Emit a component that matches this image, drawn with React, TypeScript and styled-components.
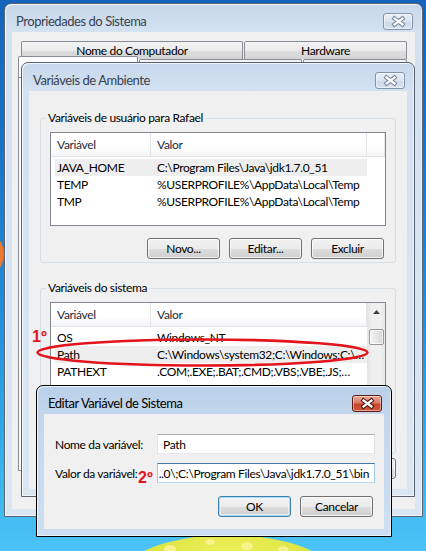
import React from "react";
import styled, { createGlobalStyle } from "styled-components";

const FONT = `Lato, "Noto Sans", "DejaVu Sans", sans-serif`;

const GlobalStyle = createGlobalStyle`
  *, *::before, *::after { box-sizing: border-box; }
  html, body { margin: 0; padding: 0; background: #1a7ccc; }
  body { font-family: ${FONT}; font-size: 12px; letter-spacing: -0.35px; color: #000; }
`;

const Desktop = styled.div`
  position: relative;
  width: 426px;
  height: 551px;
  overflow: hidden;
  background: linear-gradient(180deg, #1464bd 0%, #1a76cb 30%, #218cda 55%, #31a9e8 78%, #4cc3f6 100%);
`;

const Wallpaper = styled.svg`
  position: absolute;
  left: 0;
  top: 0;
`;

const Frame = styled.div<{ $x: number; $y: number; $w: number; $h: number; $active?: boolean }>`
  position: absolute;
  isolation: isolate;
  left: ${(p) => p.$x}px;
  top: ${(p) => p.$y}px;
  width: ${(p) => p.$w}px;
  height: ${(p) => p.$h}px;
  display: flex;
  flex-direction: column;
  padding: 0 7px 7px;
  border: 1px solid ${(p) => (p.$active ? "#000" : "#5a6270")};
  border-radius: 7px 7px 0 0;
  background: ${(p) =>
    p.$active
      ? "linear-gradient(180deg, #b9d0e9 0px, #c3d6ec 28px, #cddff1 100%)"
      : "linear-gradient(180deg, #c8d8eb 0px, #d3e1f0 28px, #dbe6f3 100%)"};
  box-shadow: inset 1px 1px 0 rgba(255, 255, 255, 0.75), inset -1px -1px 0 rgba(255, 255, 255, 0.55);
`;

const TitleBar = styled.div<{ $active?: boolean }>`
  flex: none;
  height: 28px;
  padding: 6px 2px 0 4px;
  display: flex;
  align-items: center;
  justify-content: space-between;
  font-size: 13px;
  letter-spacing: -0.45px;
  color: ${(p) => (p.$active ? "#000" : "#38424e")};
`;

const TitleText = styled.span`
  white-space: nowrap;
`;

const CloseButton = styled.div<{ $active?: boolean }>`
  flex: none;
  width: 30px;
  height: 17px;
  display: flex;
  align-items: center;
  justify-content: center;
  border: 1px solid ${(p) => (p.$active ? "#5b1d13" : "#8393a8")};
  border-radius: 3px;
  background: ${(p) =>
    p.$active
      ? "linear-gradient(180deg, #e8aa9b 0%, #d97a65 45%, #c6432b 55%, #d2593e 100%)"
      : "linear-gradient(180deg, #e9f0f8 0%, #dae5f1 50%, #cbd9ea 51%, #d8e4f1 100%)"};
  box-shadow: inset 0 0 0 1px rgba(255, 255, 255, 0.45);
`;

const Client = styled.div`
  flex: 1;
  min-height: 0;
  position: relative;
  background: #f0f0f0;
  display: flex;
  flex-direction: column;
`;

/* ---------- Window 1: Propriedades do Sistema ---------- */

const SysClient = styled(Client)`
  padding: 9px 7px 0 6px;
`;

const TabRow = styled.div<{ $indent?: number }>`
  flex: none;
  height: 18px;
  display: flex;
  align-items: flex-end;
  gap: 1px;
  padding-left: ${(p) => p.$indent ?? 0}px;
`;

const Tab = styled.div<{ $w: number; $selected?: boolean }>`
  flex: none;
  width: ${(p) => p.$w}px;
  height: ${(p) => (p.$selected ? 21 : 18)}px;
  display: flex;
  align-items: center;
  justify-content: center;
  border: 1px solid #898c95;
  border-bottom: none;
  border-radius: 2px 2px 0 0;
  background: ${(p) =>
    p.$selected ? "#fcfcfc" : "linear-gradient(180deg, #f3f3f3 0%, #ebebeb 50%, #dedede 51%, #d3d3d3 100%)"};
  white-space: nowrap;
  position: relative;
  z-index: ${(p) => (p.$selected ? 1 : 0)};
`;

const TabPanel = styled.div`
  flex: none;
  height: 394px;
  border: 1px solid #898c95;
  background: #fcfcfc;
`;

/* ---------- Window 2: Variáveis de Ambiente ---------- */

const EnvClient = styled(Client)`
  padding: 0 11px 10px;
`;

const Group = styled.fieldset<{ $top: number; $bottom: number }>`
  margin: ${(p) => p.$top}px 0 0;
  padding: 7px 9px ${(p) => p.$bottom}px;
  min-width: 0;
  border: 1px solid #d5dfe5;
  border-radius: 3px;
`;

const Legend = styled.legend`
  margin-left: -4px;
  padding: 0 2px;
  font-size: 12px;
  line-height: 14px;
  color: #000;
`;

const ListBox = styled.div<{ $h: number }>`
  height: ${(p) => p.$h}px;
  display: flex;
  border: 1px solid #828790;
  background: #fff;
  overflow: hidden;
`;

const ListMain = styled.div`
  flex: 1;
  min-width: 0;
  display: flex;
  flex-direction: column;
`;

const Header = styled.div`
  flex: none;
  height: 24px;
  display: flex;
`;

const HeaderCell = styled.div<{ $w?: number }>`
  flex: ${(p) => (p.$w ? "none" : "1")};
  width: ${(p) => (p.$w ? `${p.$w}px` : "auto")};
  padding-left: 6px;
  display: flex;
  align-items: center;
  border-right: 1px solid #e5e5e5;
  border-bottom: 1px solid #e5e5e5;
  background: linear-gradient(180deg, #ffffff 0%, #ffffff 55%, #f4f5f7 100%);
  color: #1c2a3a;
  white-space: nowrap;
`;

const Rows = styled.div`
  padding: 2px 0 0 4px;
`;

const Row = styled.div<{ $selected?: boolean }>`
  width: 312px;
  height: 17px;
  display: grid;
  grid-template-columns: 96px 1fr;
  align-items: center;
  background: ${(p) => (p.$selected ? "#eeeeee" : "transparent")};
  white-space: nowrap;
`;

const Cell = styled.span<{ $pad: number }>`
  padding-left: ${(p) => p.$pad}px;
  overflow: hidden;
`;

const VScroll = styled.div`
  flex: none;
  width: 18px;
  display: flex;
  flex-direction: column;
  align-items: center;
  background: linear-gradient(90deg, #e2e2e2 0%, #efefef 25%, #f0f0f0 75%, #e6e6e6 100%);
`;

const ScrollArrow = styled.div`
  flex: none;
  width: 18px;
  height: 17px;
  display: flex;
  align-items: center;
  justify-content: center;
`;

const ScrollThumb = styled.div`
  flex: none;
  width: 15px;
  height: 16px;
  margin-top: 9px;
  border: 1px solid #979797;
  border-radius: 2px;
  background: linear-gradient(90deg, #f4f4f4 0%, #e6e6e6 50%, #d6d6d6 100%);
  box-shadow: inset 0 0 0 1px rgba(255, 255, 255, 0.7);
`;

const ButtonRow = styled.div<{ $mt: number; $mr?: number }>`
  flex: none;
  display: flex;
  justify-content: flex-end;
  gap: 9px;
  margin-top: ${(p) => p.$mt}px;
  margin-right: ${(p) => p.$mr ?? 0}px;
`;

const Button = styled.div<{ $default?: boolean }>`
  flex: none;
  width: 73px;
  height: 21px;
  display: flex;
  align-items: center;
  justify-content: center;
  border: 1px solid ${(p) => (p.$default ? "#3c7fb1" : "#707070")};
  border-radius: 3px;
  background: linear-gradient(180deg, #f2f2f2 0%, #ebebeb 50%, #dddddd 51%, #cfcfcf 100%);
  box-shadow: ${(p) =>
    p.$default ? "inset 0 0 0 1px #a8dcf5, inset 0 0 0 2px rgba(255,255,255,0.5)" : "inset 0 0 0 1px rgba(255,255,255,0.75)"};
  color: #000;
  white-space: nowrap;
`;

/* ---------- Window 3: Editar Variável de Sistema ---------- */

const EditClient = styled(Client)`
  padding: 20px 9px 0 11px;
`;

const FieldGrid = styled.div`
  display: grid;
  grid-template-columns: 1fr 218px;
  row-gap: 9px;
  align-items: center;
`;

const FieldLabel = styled.span`
  color: #000;
  white-space: nowrap;
`;

const TextField = styled.div<{ $focused?: boolean }>`
  height: 20px;
  display: flex;
  align-items: center;
  justify-content: ${(p) => (p.$focused ? "flex-end" : "flex-start")};
  padding: 0 5px;
  background: #fff;
  white-space: nowrap;
  overflow: hidden;
  border: 1px solid;
  border-color: ${(p) =>
    p.$focused ? "#3d7bad #a4c9e3 #b7d9ed #a4c9e3" : "#abadb3 #dbdfe6 #e3e9ef #e2e3ea"};
`;

const FieldText = styled.span`
  flex: none;
`;

/* ---------- Annotations ---------- */

const Annotation = styled.svg`
  position: absolute;
  left: 0;
  top: 0;
  pointer-events: none;
`;

const Mark = styled.span<{ $x: number; $y: number }>`
  position: absolute;
  left: ${(p) => p.$x}px;
  top: ${(p) => p.$y}px;
  font-family: "Liberation Sans", Arial, sans-serif;
  font-weight: bold;
  font-size: 16px;
  letter-spacing: 0;
  line-height: 1;
  color: #e3141b;
`;

function CloseGlyph({ active }: { active?: boolean }) {
  const outline = active ? "#4a140b" : "#76849a";
  const d = "M2.5 1.5 L10.5 7.5 M10.5 1.5 L2.5 7.5";
  return (
    <svg width="13" height="9" viewBox="0 0 13 9" style={{ overflow: "visible" }}>
      <path d={d} stroke={outline} strokeWidth="4.2" strokeLinecap="square" fill="none" />
      <path d={d} stroke="#fff" strokeWidth="2.2" strokeLinecap="square" fill="none" />
    </svg>
  );
}

type WinProps = {
  title: string;
  x: number;
  y: number;
  w: number;
  h: number;
  active?: boolean;
  children: React.ReactNode;
};

function Window({ title, x, y, w, h, active, children }: WinProps) {
  return (
    <Frame $x={x} $y={y} $w={w} $h={h} $active={active}>
      <TitleBar $active={active}>
        <TitleText>{title}</TitleText>
        <CloseButton $active={active}>
          <CloseGlyph active={active} />
        </CloseButton>
      </TitleBar>
      {children}
    </Frame>
  );
}

type Item = { name: string; value: string; selected?: boolean };

const userVars: Item[] = [
  { name: "JAVA_HOME", value: "C:\\Program Files\\Java\\jdk1.7.0_51", selected: true },
  { name: "TEMP", value: "%USERPROFILE%\\AppData\\Local\\Temp" },
  { name: "TMP", value: "%USERPROFILE%\\AppData\\Local\\Temp" },
];

const sysVars: Item[] = [
  { name: "OS", value: "Windows_NT" },
  { name: "Path", value: "C:\\Windows\\system32;C:\\Windows;C:\\\u2026", selected: true },
  { name: "PATHEXT", value: ".COM;.EXE;.BAT;.CMD;.VBS;.VBE;.JS;\u2026" },
  { name: "PROCESSOR_A\u2026", value: "x86" },
];

function ItemRows({ items }: { items: Item[] }) {
  return (
    <Rows>
      {items.map((it) => (
        <Row key={it.name} $selected={it.selected}>
          <Cell $pad={2}>{it.name}</Cell>
          <Cell $pad={6}>{it.value}</Cell>
        </Row>
      ))}
    </Rows>
  );
}

export default function App() {
  return (
    <>
      <GlobalStyle />
      <Desktop>
        <Wallpaper width="426" height="551" viewBox="0 0 426 551">
          <defs>
            <radialGradient id="meadow" cx="0.5" cy="0.2" r="0.7">
              <stop offset="0" stopColor="#eef05a" />
              <stop offset="1" stopColor="#cdd92c" />
            </radialGradient>
          </defs>
          <ellipse cx="-28" cy="254" rx="32" ry="28" fill="#ee7a30" />
          <ellipse cx="228" cy="580" rx="110" ry="45" fill="url(#meadow)" />
          <ellipse cx="170" cy="549" rx="6" ry="4" fill="#f8f28a" />
          <ellipse cx="210" cy="542" rx="5" ry="3" fill="#f8f28a" />
          <ellipse cx="247" cy="546" rx="6" ry="4" fill="#f8f28a" />
          <ellipse cx="283" cy="549" rx="5" ry="3" fill="#f8f28a" />
        </Wallpaper>

        <Window title="Propriedades do Sistema" x={4} y={3} w={419} h={514}>
          <SysClient>
            <TabRow $indent={3}>
              <Tab $w={222}>Nome do Computador</Tab>
              <Tab $w={163}>Hardware</Tab>
            </TabRow>
            <TabRow>
              <Tab $w={120} $selected>
                Avançado
              </Tab>
              <Tab $w={163}>Proteção do Sistema</Tab>
              <Tab $w={104}>Remoto</Tab>
            </TabRow>
            <TabPanel />
          </SysClient>
        </Window>

        <Window title="Variáveis de Ambiente" x={21} y={62} w={394} h={435}>
          <EnvClient>
            <Group $top={20} $bottom={3}>
              <Legend>Variáveis de usuário para Rafael</Legend>
              <ListBox $h={94}>
                <ListMain>
                  <Header>
                    <HeaderCell $w={100}>Variável</HeaderCell>
                    <HeaderCell $w={216}>Valor</HeaderCell>
                    <HeaderCell />
                  </Header>
                  <ItemRows items={userVars} />
                </ListMain>
              </ListBox>
              <ButtonRow $mt={12} $mr={2}>
                <Button>Novo...</Button>
                <Button>Editar...</Button>
                <Button>Excluir</Button>
              </ButtonRow>
            </Group>
            <Group $top={18} $bottom={7}>
              <Legend>Variáveis do sistema</Legend>
              <ListBox $h={111}>
                <ListMain>
                  <Header>
                    <HeaderCell $w={100}>Variável</HeaderCell>
                    <HeaderCell>Valor</HeaderCell>
                  </Header>
                  <ItemRows items={sysVars} />
                </ListMain>
                <VScroll>
                  <ScrollArrow>
                    <svg width="7" height="4" viewBox="0 0 7 4">
                      <path d="M0 4 L3.5 0 L7 4 Z" fill="#404040" />
                    </svg>
                  </ScrollArrow>
                  <ScrollThumb />
                </VScroll>
              </ListBox>
              <ButtonRow $mt={12} $mr={2}>
                <Button>Novo...</Button>
                <Button>Editar...</Button>
                <Button>Excluir</Button>
              </ButtonRow>
            </Group>
            <ButtonRow $mt={4}>
              <Button>OK</Button>
              <Button>Cancelar</Button>
            </ButtonRow>
          </EnvClient>
        </Window>

        <Window title="Editar Variável de Sistema" x={36} y={385} w={356} h={152} active>
          <EditClient>
            <FieldGrid>
              <FieldLabel>Nome da variável:</FieldLabel>
              <TextField>
                <FieldText>Path</FieldText>
              </TextField>
              <FieldLabel>Valor da variável:</FieldLabel>
              <TextField $focused>
                <FieldText>..0\;C:\Program Files\Java\jdk1.7.0_51\bin</FieldText>
              </TextField>
            </FieldGrid>
            <ButtonRow $mt={13} $mr={2}>
              <Button $default>OK</Button>
              <Button>Cancelar</Button>
            </ButtonRow>
          </EditClient>
        </Window>

        <Annotation width="426" height="551" viewBox="0 0 426 551">
          <ellipse cx="202.5" cy="352.5" rx="165" ry="13" fill="none" stroke="#e3141b" strokeWidth="2.6" />
        </Annotation>
        <Mark $x={32} $y={329}>1º</Mark>
        <Mark $x={138} $y={470}>2º</Mark>
      </Desktop>
    </>
  );
}
